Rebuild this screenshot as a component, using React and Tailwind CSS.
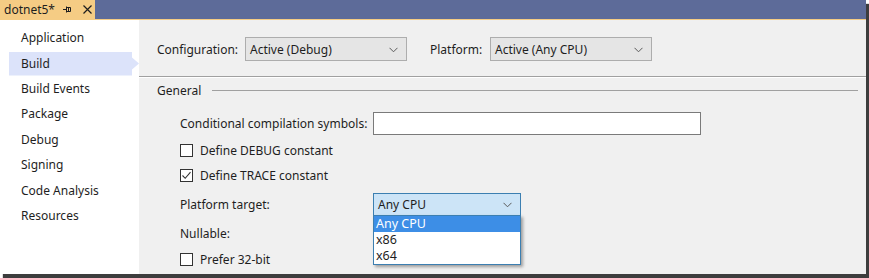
import React from 'react'

const NAV = ['Application', 'Build', 'Build Events', 'Package', 'Debug', 'Signing', 'Code Analysis', 'Resources']

function Chevron() {
  return (
    <svg width="9" height="6" viewBox="0 0 9 6" className="shrink-0">
      <path d="M0.5 0.8 L4.5 4.8 L8.5 0.8" fill="none" stroke="#5a5a5a" strokeWidth="1" />
    </svg>
  )
}

function Select({ value, width, active }) {
  return (
    <div
      className={
        'flex h-full items-center justify-between border pl-[4px] pr-[8px] pt-px ' +
        (active ? 'border-[#3c7fb1] bg-[#cce4f7]' : 'border-[#adadad] bg-[#e5e5e5]')
      }
      style={{ width }}
    >
      <span>{value}</span>
      <Chevron />
    </div>
  )
}

function Checkbox({ checked, label }) {
  return (
    <div className="flex h-[25px] items-center">
      <div className="flex h-[13px] w-[13px] items-center justify-center border border-[#333333] bg-white">
        {checked && (
          <svg width="11" height="11" viewBox="0 0 11 11">
            <path d="M1.5 5.5 L4.2 8.3 L9.5 2.2" fill="none" stroke="#333333" strokeWidth="1.1" />
          </svg>
        )}
      </div>
      <span className="ml-[7px] pt-px">{label}</span>
    </div>
  )
}

export default function App() {
  return (
    <div
      className="h-[278px] w-[869px] overflow-hidden bg-white text-[12px] leading-none text-[#1e1e1e]"
      style={{ fontFamily: '"Noto Sans", "Open Sans", sans-serif' }}
    >
      <div className="flex h-[274px] w-[866px] flex-col shadow-[3px_4px_1px_rgba(40,40,40,0.9)]">
        {/* tab well */}
        <div className="flex h-[19px] shrink-0 bg-[#5d6b99]">
          <div className="flex w-[95px] items-center bg-[#f5cc84] pl-[4px]">
            <span className="pt-px">dotnet5*</span>
            <svg width="9" height="7" viewBox="0 0 9 7" className="ml-[8px]">
              <path d="M0 3.5 H3 M3.5 0.5 V6.5 M3.5 1.5 H7.5 V5.5 H3.5 M5.5 1.5 V5.5" fill="none" stroke="#1e1e1e" strokeWidth="1" />
            </svg>
            <svg width="9" height="9" viewBox="0 0 9 9" className="ml-[11px]">
              <path d="M0.5 0.5 L8.5 8.5 M8.5 0.5 L0.5 8.5" fill="none" stroke="#1e1e1e" strokeWidth="1.2" />
            </svg>
          </div>
        </div>
        <div className="h-px shrink-0 bg-[#f5cc84]" />

        <div className="flex min-h-0 flex-1">
          {/* left nav */}
          <div className="w-[139px] shrink-0 bg-white pt-[5px]">
            {NAV.map((item) => (
              <div key={item} className="flex h-[25.4px] items-center pt-px">
                {item === 'Build' ? (
                  <div className="ml-[9px] flex h-[24px] w-[130px] items-center bg-[#dce3fa] pl-[12px] pt-px [clip-path:polygon(0_0,123px_0,123px_6px,130px_12px,123px_18px,123px_24px,0_24px)]">
                    {item}
                  </div>
                ) : (
                  <span className="pl-[21px]">{item}</span>
                )}
              </div>
            ))}
          </div>

          {/* content */}
          <div className="relative min-w-0 flex-1 bg-[#f0f0f0]">
            <div className="mt-[17px] flex h-[24px] items-center pl-[18px]">
              <span className="w-[88px] pt-px">Configuration:</span>
              <Select value="Active (Debug)" width={162} />
              <span className="ml-[23px] w-[60px] pt-px">Platform:</span>
              <Select value="Active (Any CPU)" width={162} />
            </div>

            <div className="mt-[15px] h-px bg-[#a0a0a0]" />
            <div className="h-px bg-white" />

            <div className="flex h-[25px] items-center pl-[18px] pr-[8px]">
              <span className="pt-px">General</span>
              <div className="ml-[11px] h-px flex-1 bg-[#a0a0a0]" />
            </div>

            <div className="pl-[41px]">
              <div className="mt-[9px] flex h-[23px] items-center">
                <span className="w-[193px] pt-px">Conditional compilation symbols:</span>
                <div className="h-full w-[328px] border border-[#7a7a7a] bg-white" />
              </div>

              <div className="mt-[3px]">
                <Checkbox label="Define DEBUG constant" />
                <Checkbox checked label="Define TRACE constant" />
              </div>

              <div className="mt-[5px] flex h-[23px] items-center">
                <span className="w-[193px] pt-px">Platform target:</span>
                <Select value="Any CPU" width={148} active />
              </div>

              <div className="mt-[4px] flex h-[26px] items-center pt-px">Nullable:</div>
              <div className="mt-px">
                <Checkbox label="Prefer 32-bit" />
              </div>
            </div>

            {/* open dropdown list */}
            <div className="absolute left-[234px] top-[195px] w-[148px] border border-[#3c7fb1] bg-white text-[12.5px] leading-[16px] shadow-[2px_2px_3px_rgba(0,0,0,0.35)]">
              <div className="h-[16px] bg-[#3d8ee6] pl-[2px] text-white">Any CPU</div>
              <div className="h-[16px] pl-[2px]">x86</div>
              <div className="h-[16px] pl-[2px]">x64</div>
            </div>
          </div>
        </div>
      </div>
    </div>
  )
}
